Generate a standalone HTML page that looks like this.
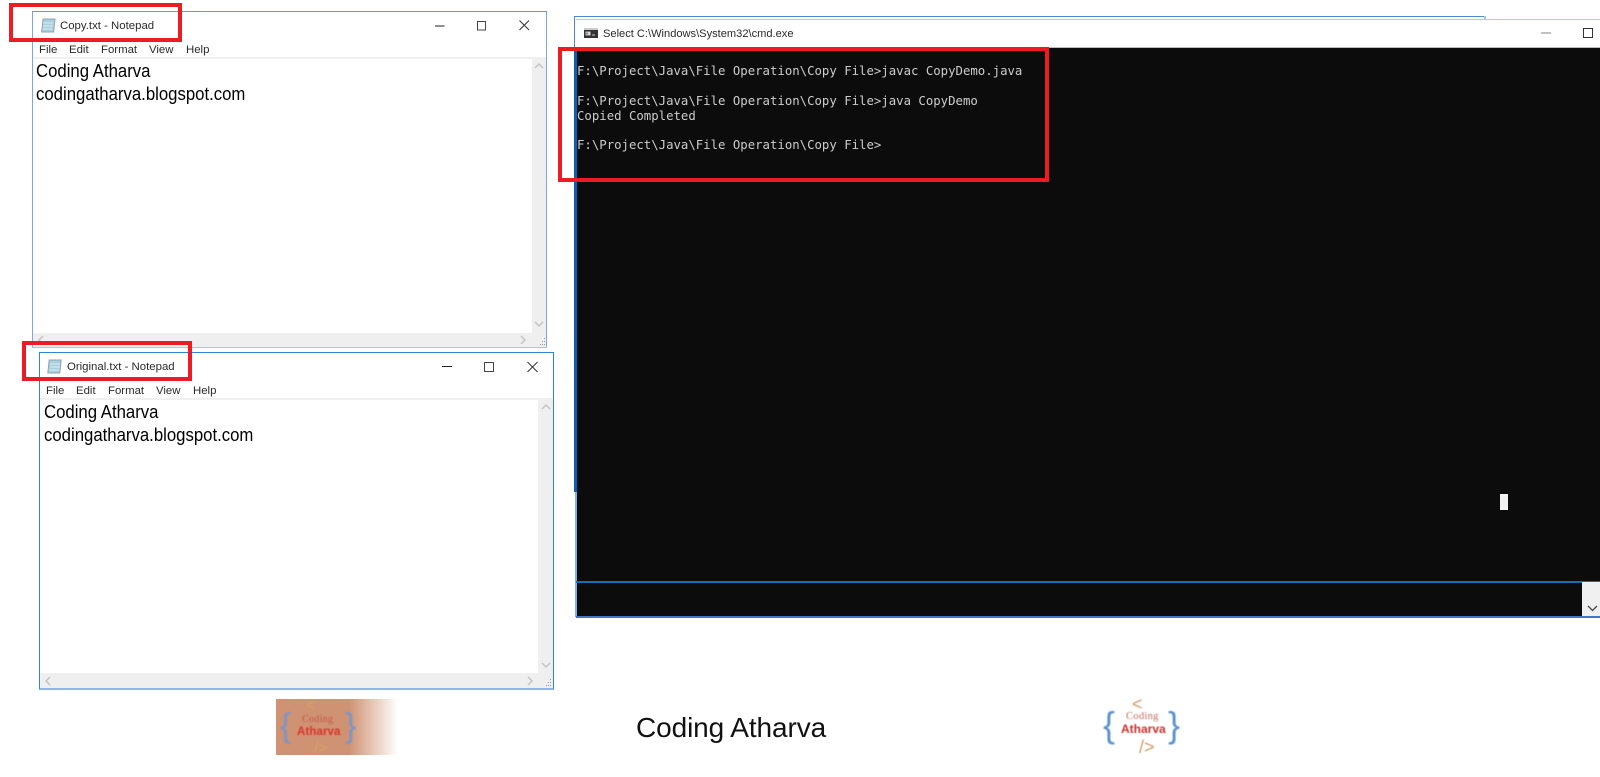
<!DOCTYPE html>
<html><head><meta charset="utf-8"><title>Coding Atharva</title>
<style>
html,body{margin:0;padding:0;background:#fff;width:1600px;height:777px;overflow:hidden}
body{position:relative;font-family:"Liberation Sans",sans-serif}
.a{position:absolute}
.t{position:absolute;white-space:nowrap;line-height:1}
.ui{font-size:11.4px;color:#2a2a2a}
.doc{font-size:18px;color:#000;transform:scaleX(.93);transform-origin:left top}
.cmd{font-family:"DejaVu Sans Mono",monospace;font-size:12.34px;color:#ccc;line-height:15px;white-space:nowrap;position:absolute;left:577px}
.red{position:absolute;border:4.5px solid #ed1c24;box-sizing:border-box}
svg{position:absolute;overflow:visible}
.logo{position:absolute;left:0;top:0;width:1600px;height:777px;filter:blur(.45px)}
</style></head><body>

<!-- Notepad 1 -->
<div class="a" style="left:32px;top:11px;width:515px;height:337px;box-sizing:border-box;border:1px solid #7fa6e4;border-bottom:2px solid #a9c4ee;border-top-color:#5f9be0;background:#fff"></div>
<div class="a" style="left:33px;top:57px;width:513px;height:2px;background:#f0f0f0"></div>
<div class="a" style="left:532px;top:59px;width:14px;height:288px;background:#efefef"></div>
<div class="a" style="left:33px;top:333px;width:513px;height:14px;background:#efefef"></div>
<svg style="left:0;top:0" width="1" height="1">
<path d="M535 68l4-4 4 4" fill="none" stroke="#c4c4c4" stroke-width="1.5"/>
<path d="M535 322l4 4 4-4" fill="none" stroke="#c4c4c4" stroke-width="1.5"/>
<path d="M43 336l-4 4 4 4" fill="none" stroke="#c4c4c4" stroke-width="1.5"/>
<path d="M521 336l4 4-4 4" fill="none" stroke="#c4c4c4" stroke-width="1.5"/>
<path d="M544 338h1v1h-1zM542 341h1v1h-1zM544 341h1v1h-1zM540 344h1v1h-1zM542 344h1v1h-1zM544 344h1v1h-1z" fill="#999"/>
<path d="M435 26h9.5" stroke="#222" stroke-width="1" fill="none"/>
<rect x="477.5" y="21.5" width="8" height="8.500" fill="none" stroke="#444"/>
<path d="M519.500 20.500l9.500 9.500M529 20.500l-9.500 9.500" stroke="#333" fill="none"/>
<rect x="42" y="19" width="12" height="13" fill="#a9cfe0" stroke="#8fa4ad" transform="skewX(-6) translate(3 0)"/>
<path d="M43 23h10M43 26h10M42.500 29h10" stroke="#dcecf2" fill="none"/>
</svg>
<div class="t ui" style="left:60px;top:21px;">Copy.txt - Notepad</div>
<div class="t ui" style="left:39px;top:44.500px;">File</div>
<div class="t ui" style="left:69px;top:44.500px;">Edit</div>
<div class="t ui" style="left:101px;top:44.500px;">Format</div>
<div class="t ui" style="left:149px;top:44.500px;">View</div>
<div class="t ui" style="left:186px;top:44.500px;">Help</div>
<div class="t doc" style="left:36px;top:62px;">Coding Atharva</div>
<div class="t doc" style="left:36px;top:85px;">codingatharva.blogspot.com</div>

<!-- Notepad 2 -->
<div class="a" style="left:39px;top:352px;width:515px;height:338px;box-sizing:border-box;border:1px solid #2f83d9;border-bottom:2px solid #8fb5ea;background:#fff"></div>
<div class="a" style="left:40px;top:398px;width:513px;height:2px;background:#f0f0f0"></div>
<div class="a" style="left:538px;top:400px;width:15px;height:288px;background:#efefef"></div>
<div class="a" style="left:40px;top:673px;width:513px;height:15px;background:#efefef"></div>
<svg style="left:0;top:0" width="1" height="1">
<path d="M542 409l4-4 4 4" fill="none" stroke="#c4c4c4" stroke-width="1.500"/>
<path d="M542 663l4 4 4-4" fill="none" stroke="#c4c4c4" stroke-width="1.500"/>
<path d="M50 677l-4 4 4 4" fill="none" stroke="#c4c4c4" stroke-width="1.500"/>
<path d="M528 677l4 4-4 4" fill="none" stroke="#c4c4c4" stroke-width="1.500"/>
<path d="M550 679h1v1h-1zM548 682h1v1h-1zM550 682h1v1h-1zM546 685h1v1h-1zM548 685h1v1h-1zM550 685h1v1h-1z" fill="#999"/>
<path d="M442 366.500h10" stroke="#222" fill="none"/>
<rect x="484.500" y="362.500" width="9" height="9" fill="none" stroke="#444"/>
<path d="M527.500 362l10 10M537.500 362l-10 10" stroke="#333" fill="none"/>
<rect x="49" y="360" width="12" height="13" fill="#a9cfe0" stroke="#8fa4ad" transform="skewX(-6) translate(38 0)"/>
<path d="M50 364h10M50 367h10M49.500 370h10" stroke="#dcecf2" fill="none"/>
</svg>
<div class="t ui" style="left:67px;top:362px;">Original.txt - Notepad</div>
<div class="t ui" style="left:46px;top:385.500px;">File</div>
<div class="t ui" style="left:76px;top:385.500px;">Edit</div>
<div class="t ui" style="left:108px;top:385.500px;">Format</div>
<div class="t ui" style="left:156px;top:385.500px;">View</div>
<div class="t ui" style="left:193px;top:385.500px;">Help</div>
<div class="t doc" style="left:44px;top:403px;">Coding Atharva</div>
<div class="t doc" style="left:44px;top:426px;">codingatharva.blogspot.com</div>

<!-- CMD -->
<div class="a" style="left:574px;top:16px;width:911px;height:1px;background:#4a8ad0"></div>
<div class="a" style="left:1484px;top:16px;width:2px;height:3px;background:#a9c4ee"></div>
<div class="a" style="left:574px;top:16px;width:1px;height:32px;background:#4a8ad0"></div>
<div class="a" style="left:576px;top:19px;width:1024px;height:1px;background:#b4cbee"></div>
<div class="a" style="left:577px;top:47px;width:1023px;height:1px;background:#bbb"></div>
<div class="a" style="left:574px;top:48px;width:3px;height:444px;background:#0c5fb0"></div>
<div class="a" style="left:575px;top:492px;width:2px;height:125px;background:#7fb0e8"></div>
<div class="a" style="left:577px;top:48px;width:1023px;height:533px;background:#0c0c0c"></div>
<div class="a" style="left:577px;top:582px;width:1005px;height:34px;background:#0c0c0c"></div>
<div class="a" style="left:576px;top:580.500px;width:1024px;height:2px;background:#1170bd"></div>
<div class="a" style="left:576px;top:616px;width:1024px;height:1.500px;background:#3d78c8"></div>
<div class="a" style="left:1582px;top:582px;width:18px;height:34px;background:#f0f0f0"></div>
<div class="a" style="left:1500px;top:494px;width:8px;height:16px;background:#f2f2f2"></div>
<svg style="left:0;top:0" width="1" height="1">
<path d="M1588 606l4.500 4.500 4.500-4.500" fill="none" stroke="#444" stroke-width="1.300"/>
<path d="M1541 33h10" stroke="#aaa" stroke-width="1.500" fill="none"/>
<rect x="1583.500" y="28.500" width="9" height="9" fill="none" stroke="#333"/>
<rect x="584" y="28" width="14" height="10" fill="#333"/>
<rect x="584" y="28" width="14" height="2" fill="#ccc"/>
<path d="M586 32h2v3h-2zM589 32h1v3h-1zM592 35h3" fill="none" stroke="#fff" stroke-width=".8"/>
</svg>
<div class="t ui" style="left:603px;top:28.500px;font-size:11.1px;">Select C:\Windows\System32\cmd.exe</div>
<div class="cmd" style="top:64px">F:\Project\Java\File Operation\Copy File&gt;javac CopyDemo.java</div>
<div class="cmd" style="top:94px">F:\Project\Java\File Operation\Copy File&gt;java CopyDemo</div>
<div class="cmd" style="top:109px">Copied Completed</div>
<div class="cmd" style="top:138px">F:\Project\Java\File Operation\Copy File&gt;</div>

<!-- Red boxes -->
<div class="red" style="left:9px;top:3px;width:173px;height:39px"></div>
<div class="red" style="left:22px;top:341px;width:170px;height:40px"></div>
<div class="red" style="left:558px;top:47px;width:491px;height:135px"></div>

<!-- Left logo -->
<div class="a" style="left:276px;top:699px;width:122px;height:56px;background:linear-gradient(to right,#cf9272 0,#cf9272 60%,#fff 100%)"></div>
<div class="logo">
<div class="t" style="left:280px;top:709px;font:34px/1 'Liberation Sans',sans-serif;color:#7c95c9">{</div>
<div class="t" style="left:345px;top:709px;font:34px/1 'Liberation Sans',sans-serif;color:#7c95c9">}</div>
<div class="t" style="left:302px;top:715px;font:10px/1 'Liberation Serif',serif;color:#c9564b;letter-spacing:.3px">Coding</div>
<div class="t" style="left:297px;top:727px;font:bold 11.5px/1 'Liberation Sans',sans-serif;color:#d8342c;letter-spacing:.1px">Atharva</div>
<div class="t" style="left:306px;top:698px;font:16px/1 'Liberation Sans',sans-serif;color:#dca063">&lt;</div>
<div class="t" style="left:314px;top:741px;font:16px/1 'Liberation Sans',sans-serif;color:#dca063">/&gt;</div>

<!-- Right logo -->
<div class="t" style="left:1103px;top:707px;font:36px/1 'Liberation Sans',sans-serif;color:#5b93cf">{</div>
<div class="t" style="left:1168px;top:707px;font:36px/1 'Liberation Sans',sans-serif;color:#5b93cf">}</div>
<div class="t" style="left:1126px;top:712px;font:10.500px/1 'Liberation Serif',serif;color:#bd6a60;letter-spacing:.3px">Coding</div>
<div class="t" style="left:1121px;top:723px;font:bold 12px/1 'Liberation Sans',sans-serif;color:#c9302c">Atharva</div>
<div class="t" style="left:1132px;top:695px;font:18px/1 'Liberation Sans',sans-serif;color:#d09a6b">&lt;</div>
<div class="t" style="left:1139px;top:738px;font:18px/1 'Liberation Sans',sans-serif;color:#d09a6b">/&gt;</div>
</div>

<!-- Center title -->
<div class="t" style="left:636px;top:714px;font-size:28px;color:#111;letter-spacing:-.1px">Coding Atharva</div>

</body></html>
